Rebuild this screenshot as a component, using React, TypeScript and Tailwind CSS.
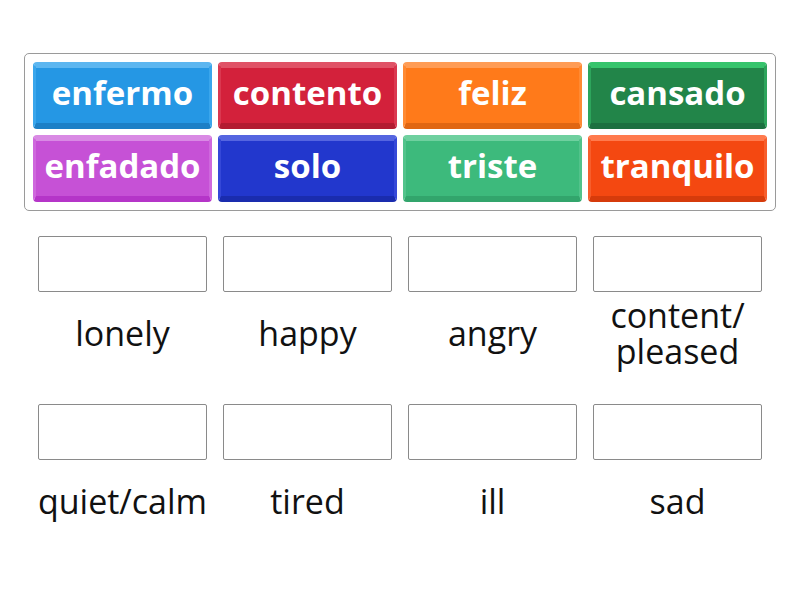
const tiles = [
  { text: "enfermo", bg: "bg-[#2597e4]", top: "border-t-[#5cb6f0]", side: "border-x-[#3aa6ec]", bottom: "border-b-[#1c7fc6]" },
  { text: "contento", bg: "bg-[#d3213b]", top: "border-t-[#e05266]", side: "border-x-[#da3850]", bottom: "border-b-[#b31b31]" },
  { text: "feliz", bg: "bg-[#ff7a1a]", top: "border-t-[#ff9c55]", side: "border-x-[#ff8a33]", bottom: "border-b-[#e06612]" },
  { text: "cansado", bg: "bg-[#228549]", top: "border-t-[#36c46c]", side: "border-x-[#2da55c]", bottom: "border-b-[#1c7040]" },
  { text: "enfadado", bg: "bg-[#c651d6]", top: "border-t-[#d98ae4]", side: "border-x-[#cf68dd]", bottom: "border-b-[#b535c8]" },
  { text: "solo", bg: "bg-[#2237cd]", top: "border-t-[#5565e0]", side: "border-x-[#3548d8]", bottom: "border-b-[#1a2cae]" },
  { text: "triste", bg: "bg-[#3dba7c]", top: "border-t-[#6fd09f]", side: "border-x-[#52c38b]", bottom: "border-b-[#32a56c]" },
  { text: "tranquilo", bg: "bg-[#f44811]", top: "border-t-[#ff7a4d]", side: "border-x-[#f75e2c]", bottom: "border-b-[#d63b0b]" },
];

const rows = [
  ["lonely", "happy", "angry", "content/ pleased"],
  ["quiet/calm", "tired", "ill", "sad"],
];

export default function App() {
  return (
    <div className="h-[600px] w-[800px] bg-white font-['Open_Sans',sans-serif]">
      <div className="pt-[53px] px-[24px]">
        <div className="grid grid-cols-4 gap-[6px] rounded-[5px] border border-[#9a9a9a] p-[8px]">
          {tiles.map((t) => (
            <div
              key={t.text}
              className={`flex h-[67px] items-center justify-center rounded-[4px] border-t-[6px] border-b-[6px] border-x-[3px] ${t.bg} ${t.top} ${t.side} ${t.bottom}`}
            >
              <span className="-mt-[6px] text-[33px] font-bold leading-none text-white">{t.text}</span>
            </div>
          ))}
        </div>
      </div>
      <div className="mt-[25px] flex flex-col gap-[28px] px-[38px]">
        {rows.map((row, i) => (
          <div key={i} className="grid grid-cols-4 gap-x-[16px]">
            {row.map((label) => (
              <div key={label} className="flex flex-col items-center">
                <div className="h-[56px] w-full rounded-[2px] border border-[#8a8a8a] bg-white" />
                <div className="flex h-[84px] w-full items-center justify-center pb-[2px] text-center text-[34px] leading-[36px] text-[#111]">
                  {label}
                </div>
              </div>
            ))}
          </div>
        ))}
      </div>
    </div>
  );
}
